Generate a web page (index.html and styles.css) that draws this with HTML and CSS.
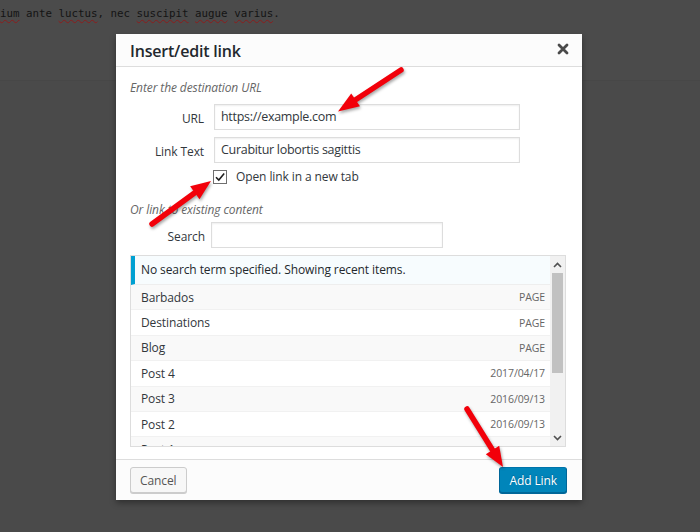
FILE: index.html
```html
<!DOCTYPE html>
<html lang="en">
<head>
    <meta charset="UTF-8">
    <title>Insert/edit link</title>
    <link rel="stylesheet" href="styles.css">
</head>
<body>

    <div class="editor">
        <p class="editor-line"><span class="typo">ium</span> ante <span class="typo">luctus</span>, nec <span class="typo">suscipit</span> <span class="typo">augue</span> <span class="typo">varius</span>.</p>
    </div>
    <div class="editor-rest"></div>

    <div class="modal">
        <div class="modal-head">
            <h1>Insert/edit link</h1>
            <button class="close" aria-label="Close">
                <svg width="12" height="12" viewBox="0 0 12 12"><path d="M2 2 L10 10 M10 2 L2 10" stroke="#4a4a4a" stroke-width="2.8" stroke-linecap="round"/></svg>
            </button>
        </div>

        <div class="modal-body">
            <p class="hint">Enter the destination URL</p>

            <div class="field">
                <label>URL</label>
                <div class="input">https://example.com</div>
            </div>
            <div class="field">
                <label>Link Text</label>
                <div class="input">Curabitur lobortis sagittis</div>
            </div>
            <div class="check-row">
                <span class="checkbox">
                    <svg width="12" height="12" viewBox="0 0 12 12"><path d="M2 6.2 L4.8 9 L10.2 2.6" fill="none" stroke="#1e1e1e" stroke-width="1.6"/></svg>
                </span>
                <span>Open link in a new tab</span>
            </div>

            <p class="hint hint-second">Or link to existing content</p>

            <div class="field search-field">
                <label>Search</label>
                <div class="input"></div>
            </div>

            <div class="results">
                <div class="results-list">
                    <div class="notice">No search term specified. Showing recent items.</div>
                    <div class="item alt"><span>Barbados</span><span class="meta">Page</span></div>
                    <div class="item"><span>Destinations</span><span class="meta">Page</span></div>
                    <div class="item alt"><span>Blog</span><span class="meta">Page</span></div>
                    <div class="item"><span>Post 4</span><span class="meta">2017/04/17</span></div>
                    <div class="item alt"><span>Post 3</span><span class="meta">2016/09/13</span></div>
                    <div class="item"><span>Post 2</span><span class="meta">2016/09/13</span></div>
                    <div class="item alt"><span>Post 1</span><span class="meta">2016/09/13</span></div>
                </div>
                <div class="scrollbar">
                    <span class="scroll-btn">
                        <svg width="9" height="6" viewBox="0 0 9 6"><path d="M1 5 L4.5 1.5 L8 5" fill="none" stroke="#505050" stroke-width="1.6"/></svg>
                    </span>
                    <div class="track"><div class="thumb"></div></div>
                    <span class="scroll-btn">
                        <svg width="9" height="6" viewBox="0 0 9 6"><path d="M1 1 L4.5 4.5 L8 1" fill="none" stroke="#505050" stroke-width="1.6"/></svg>
                    </span>
                </div>
            </div>
        </div>

        <div class="modal-foot">
            <button class="button">Cancel</button>
            <button class="button button-primary">Add Link</button>
        </div>
    </div>

    <svg class="arrows" width="700" height="532" viewBox="0 0 700 532">
        <g fill="#f2000a" stroke="#f2000a">
            <line x1="401" y1="70" x2="355.6" y2="99.8" stroke-width="5.5" stroke-linecap="round"/>
            <polygon points="338,111.5 360,106.2 351.2,93.4" stroke="none"/>

            <line x1="152" y1="224" x2="194.8" y2="192.8" stroke-width="5.5" stroke-linecap="round"/>
            <polygon points="211,181 199.5,199.3 190.1,186.3" stroke="none"/>

            <line x1="467" y1="409" x2="492.5" y2="450" stroke-width="5.5" stroke-linecap="round"/>
            <polygon points="503,467 499.2,445.8 485.8,454.2" stroke="none"/>
        </g>
    </svg>

</body>
</html>
```

FILE: styles.css
```css
body {
    margin: 0;
    width: 700px;
    height: 532px;
    overflow: hidden;
    background-color: #4a4a4a;
    font-family: "Open Sans", Arial, sans-serif;
    font-size: 12px;
    letter-spacing: -0.1px;
    color: #32373c;
    position: relative;
}

.editor {
    height: 80px;
    background-color: #4b4b4b;
    border-bottom: 1px solid #474747;
}

.editor-line {
    margin: 0;
    padding-top: 7px;
    font-family: "DejaVu Sans Mono", "Liberation Mono", monospace;
    font-size: 10.8px;
    letter-spacing: 0;
    line-height: 14px;
    color: #141414;
}

.typo {
    text-decoration: underline wavy #8a1c1c;
    text-decoration-thickness: 1px;
    text-underline-offset: 2px;
}

.editor-rest {
    height: 451px;
    background-color: #4a4a4a;
}

/* dialog */
.modal {
    position: absolute;
    left: 116px;
    top: 34px;
    width: 466px;
    height: 466px;
    background-color: #fff;
    box-shadow: 0 3px 6px rgba(0, 0, 0, 0.35);
    display: flex;
    flex-direction: column;
}

.modal-head {
    height: 32px;
    background-color: #fcfcfc;
    border-bottom: 1px solid #ddd;
    display: flex;
    align-items: center;
    justify-content: space-between;
    padding: 0 12px 0 14px;
}

.modal-head h1 {
    margin: 0;
    font-size: 16px;
    font-weight: 600;
    letter-spacing: -0.2px;
    color: #23282d;
    line-height: 32px;
    padding-top: 2px;
}

.close {
    border: none;
    background: none;
    padding: 0;
    width: 14px;
    height: 14px;
    display: flex;
    align-items: center;
    justify-content: center;
    margin-top: -2px;
}

.modal-body {
    flex: 1;
    padding: 12px 16px 12px 14px;
    display: flex;
    flex-direction: column;
}

.hint {
    margin: 0;
    font-style: italic;
    color: #666;
    line-height: 18px;
}

.hint-second {
    margin-top: 17px;
}

.field {
    display: grid;
    grid-template-columns: 74px 306px;
    column-gap: 10px;
    align-items: center;
    margin-top: 7px;
}

.hint + .field {
    margin-top: 7px;
}

.field label {
    text-align: right;
    color: #32373c;
    padding-top: 3px;
}

.input {
    box-sizing: border-box;
    height: 26px;
    border: 1px solid #ddd;
    box-shadow: inset 0 1px 2px rgba(0, 0, 0, 0.07);
    padding: 0 6px;
    line-height: 24px;
    font-size: 12.5px;
    letter-spacing: -0.3px;
    color: #32373c;
}

.hint + .search-field {
    grid-template-columns: 75px 232px;
    column-gap: 6px;
    margin-top: 3px;
}

.check-row {
    display: flex;
    align-items: center;
    gap: 9px;
    margin: 7px 0 0 83px;
    line-height: 14px;
}

.checkbox {
    box-sizing: border-box;
    width: 14px;
    height: 14px;
    border: 1px solid #6f6f6f;
    display: flex;
    align-items: center;
    justify-content: center;
    background-color: #fff;
}

/* results */
.results {
    margin-top: 7px;
    height: 192px;
    box-sizing: border-box;
    border: 1px solid #ddd;
    display: flex;
    overflow: hidden;
}

.results-list {
    flex: 1;
    overflow: hidden;
}

.notice {
    height: 29px;
    box-sizing: border-box;
    border-left: 4px solid #00a0d2;
    border-bottom: 1px solid #eee;
    background-color: #f7fcfe;
    padding-left: 6px;
    line-height: 28px;
    color: #23282d;
}

.item {
    height: 25.4px;
    box-sizing: border-box;
    border-bottom: 1px solid #f1f1f1;
    padding: 0 5px 0 10px;
    display: flex;
    justify-content: space-between;
    align-items: center;
    color: #32373c;
}

.item.alt {
    background-color: #f9f9f9;
}

.meta {
    font-size: 10.5px;
    letter-spacing: -0.1px;
    text-transform: uppercase;
    color: #666;
}

.scrollbar {
    width: 15px;
    background-color: #f1f1f1;
    display: flex;
    flex-direction: column;
}

.scroll-btn {
    height: 17px;
    display: flex;
    align-items: center;
    justify-content: center;
}

.track {
    flex: 1;
    padding: 0 2px;
}

.thumb {
    height: 100px;
    background-color: #c1c1c1;
}

/* footer */
.modal-foot {
    height: 40px;
    border-top: 1px solid #ddd;
    background-color: #fcfcfc;
    display: flex;
    align-items: center;
    justify-content: space-between;
    padding: 0 15px 0 14px;
}

.button {
    height: 26px;
    padding: 0 9px;
    border: 1px solid #ccc;
    border-radius: 3px;
    background-color: #f7f7f7;
    box-shadow: 0 1px 0 #ccc;
    color: #555;
    font-family: "Open Sans", Arial, sans-serif;
    font-size: 12px;
    letter-spacing: -0.1px;
}

.button-primary {
    background-color: #0085ba;
    border-color: #0073aa #006799 #006799;
    box-shadow: 0 1px 0 #006799;
    color: #fff;
    text-shadow: 0 -1px 1px #006799;
}

.arrows {
    position: absolute;
    left: 0;
    top: 0;
    filter: drop-shadow(1px 2px 1.5px rgba(0, 0, 0, 0.35));
}
```
